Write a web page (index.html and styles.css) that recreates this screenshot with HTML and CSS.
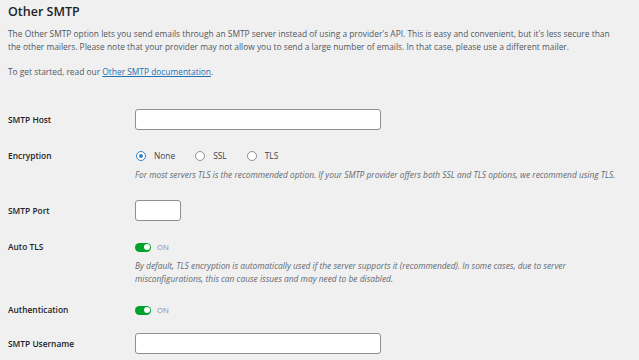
FILE: index.html
```html
<!DOCTYPE html>
<html lang="en">
<head>
    <meta charset="UTF-8">
    <meta name="viewport" content="width=device-width, initial-scale=1.0">
    <title>Other SMTP</title>
    <link rel="stylesheet" href="styles.css">
</head>
<body>
    <div class="mailer-section">
        <h2>Other SMTP</h2>
        <p class="intro">The Other SMTP option lets you send emails through an SMTP server instead of using a provider's API. This is easy and convenient, but it's less secure than the other mailers. Please note that your provider may not allow you to send a large number of emails. In that case, please use a different mailer.</p>
        <p class="intro">To get started, read our <a href="#">Other SMTP documentation</a>.</p>

        <div class="form-table">
            <div class="row row-host">
                <label class="row-label" for="smtp-host">SMTP Host</label>
                <div class="row-field">
                    <input type="text" id="smtp-host" class="text-input wide">
                </div>
            </div>

            <div class="row row-encryption">
                <div class="row-label line">Encryption</div>
                <div class="row-field">
                    <div class="radio-group line">
                        <label class="radio"><input type="radio" name="encryption" checked> None</label>
                        <label class="radio"><input type="radio" name="encryption"> SSL</label>
                        <label class="radio"><input type="radio" name="encryption"> TLS</label>
                    </div>
                    <p class="description">For most servers TLS is the recommended option. If your SMTP provider offers both SSL and TLS options, we recommend using TLS.</p>
                </div>
            </div>

            <div class="row row-port">
                <label class="row-label" for="smtp-port">SMTP Port</label>
                <div class="row-field">
                    <input type="text" id="smtp-port" class="text-input short">
                </div>
            </div>

            <div class="row row-autotls">
                <div class="row-label line">Auto TLS</div>
                <div class="row-field">
                    <label class="toggle line"><span class="switch on"></span> ON</label>
                    <p class="description">By default, TLS encryption is automatically used if the server supports it (recommended). In some cases, due to server misconfigurations, this can cause issues and may need to be disabled.</p>
                </div>
            </div>

            <div class="row row-auth">
                <div class="row-label line">Authentication</div>
                <div class="row-field">
                    <label class="toggle line"><span class="switch on"></span> ON</label>
                </div>
            </div>

            <div class="row row-username">
                <label class="row-label" for="smtp-user">SMTP Username</label>
                <div class="row-field">
                    <input type="text" id="smtp-user" class="text-input wide">
                </div>
            </div>
        </div>
    </div>
</body>
</html>
```

FILE: styles.css
```css
body {
    margin: 0;
    background-color: #f0f0f1;
    font-family: "Open Sans", "Noto Sans", sans-serif;
    color: #3c434a;
    font-size: 8.4px;
}

.mailer-section {
    padding: 0 10px 0 8px;
    width: 612px;
}

h2 {
    margin: 0;
    padding-top: 3px;
    font-size: 12.5px;
    font-weight: 600;
    line-height: 18px;
    color: #1d2327;
}

.intro {
    margin: 6px 0 12px;
    line-height: 13px;
    color: #50575e;
}

.intro a {
    color: #2271b1;
}

.form-table {
    margin-top: 21px;
}

.row {
    display: flex;
    align-items: flex-start;
    padding: 10px 0;
}

.row-label {
    width: 127px;
    flex-shrink: 0;
    font-weight: 600;
    color: #1d2327;
    line-height: 21px;
}

.row-label.line {
    line-height: 12px;
}

.row-field {
    flex: 1;
}

.line {
    line-height: 12px;
    height: 12px;
}

.text-input {
    box-sizing: border-box;
    height: 21px;
    border: 1px solid #8c8f94;
    border-radius: 3px;
    background: #fff;
    margin: 0;
    display: block;
}

.text-input.wide {
    width: 246px;
}

.text-input.short {
    width: 46px;
}

.radio-group {
    display: flex;
    gap: 19px;
    color: #3c434a;
}

.radio {
    display: flex;
    align-items: center;
    gap: 8px;
}

.radio input {
    appearance: none;
    margin: 0 0 0 1px;
    width: 10px;
    height: 10px;
    border: 1px solid #8c8f94;
    border-radius: 50%;
    background: #fff;
    box-sizing: border-box;
    position: relative;
}

.radio input:checked {
    border-color: #3582c4;
}

.radio input:checked::after {
    content: "";
    position: absolute;
    left: 2px;
    top: 2px;
    width: 4px;
    height: 4px;
    border-radius: 50%;
    background: #3582c4;
}

.description {
    margin: 6px 0 0;
    font-style: italic;
    line-height: 13px;
    color: #646970;
    max-width: 490px;
}

.toggle {
    display: flex;
    align-items: center;
    gap: 6px;
    color: #8c8f94;
    font-size: 7.8px;
}

.switch {
    display: inline-block;
    width: 16px;
    height: 9px;
    border-radius: 5px;
    background: #00a32a;
    position: relative;
}

.switch::after {
    content: "";
    position: absolute;
    top: 1.5px;
    right: 1.5px;
    width: 6px;
    height: 6px;
    border-radius: 50%;
    background: #fff;
}

.row-encryption {
    padding-bottom: 10px;
}

.row-port {
    padding-top: 9px;
}

.row-auth {
    padding: 9px 0 10px;
}

.row-username {
    padding-top: 7px;
}
```
